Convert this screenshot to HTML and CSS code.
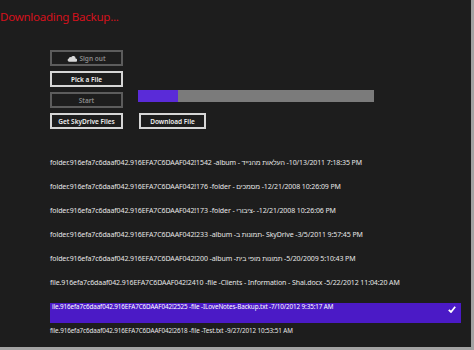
FILE: index.html
```html
<!DOCTYPE html>
<html>
<head>
<meta charset="utf-8">
<link rel="stylesheet" href="styles.css">
</head>
<body>
<div class="screen">
  <h1 class="title">Downloading Backup...</h1>
  <div class="controls">
    <button class="btn disabled"><svg class="cloud" viewBox="0 0 12 8" width="10" height="7"><path d="M2.5 8 H10 A2 2 0 0 0 10.3 4 A2.8 2.8 0 0 0 5 2.6 A2 2 0 0 0 2.2 4.1 A2 2 0 0 0 2.5 8 Z" fill="#d8d8d8"/></svg>Sign out</button>
    <div></div>
    <button class="btn">Pick a File</button>
    <div></div>
    <button class="btn disabled">Start</button>
    <div class="progress"><div class="fill" style="width:17%"></div></div>
    <button class="btn">Get SkyDrive Files</button>
    <div><button class="btn dl">Download File</button></div>
  </div>
  <ul class="list">
    <li class="item big">folder.916efa7c6daaf042.916EFA7C6DAAF042!1542 -album - <bdi>העלאות מהנייד</bdi> -10/13/2011 7:18:35 PM</li>
    <li class="item big">folder.916efa7c6daaf042.916EFA7C6DAAF042!176 -folder - <bdi>מסמכים</bdi> -12/21/2008 10:26:09 PM</li>
    <li class="item big">folder.916efa7c6daaf042.916EFA7C6DAAF042!173 -folder - <bdi>ציבורי</bdi>- -12/21/2008 10:26:06 PM</li>
    <li class="item big">folder.916efa7c6daaf042.916EFA7C6DAAF042!233 -album -<bdi>תמונות ב</bdi>- SkyDrive -3/5/2011 9:57:45 PM</li>
    <li class="item big">folder.916efa7c6daaf042.916EFA7C6DAAF042!200 -album -<bdi>תמונות מופי בית</bdi> -5/20/2009 5:10:43 PM</li>
    <li class="item big">file.916efa7c6daaf042.916EFA7C6DAAF042!2410 -file -Clients - Information - Shai.docx -5/22/2012 11:04:20 AM</li>
    <li class="item selected"><span>ile.916efa7c6daaf042.916EFA7C6DAAF042!2525 -file -ILoveNotes-Backup.txt -7/10/2012 9:35:17 AM</span><svg class="check" viewBox="0 0 8 7" width="8" height="7"><path d="M0.8 3.8 L3 6 L7.2 0.8" fill="none" stroke="#fff" stroke-width="1.8"/></svg></li>
    <li class="item">file.916efa7c6daaf042.916EFA7C6DAAF042!2618 -file -Test.txt -9/27/2012 10:53:51 AM</li>
  </ul>
</div>
</body>
</html>
```
FILE: styles.css
```css
html, body {
  margin: 0;
  padding: 0;
  background: #a3a3a3;
}
body {
  width: 474px;
  height: 350px;
  overflow: hidden;
}
.screen {
  width: 471px;
  height: 347px;
  background: #1d1d1d;
  overflow: hidden;
  font-family: "Noto Sans", "Noto Sans CJK SC", sans-serif;
  color: #e8e8e8;
}
.title {
  margin: 0;
  padding: 9px 0 0 0;
  height: 50px;
  box-sizing: border-box;
  font-size: 11.6px;
  font-weight: normal;
  color: #d4111c;
  line-height: 16px;
  letter-spacing: -0.3px;
}
.controls {
  display: grid;
  grid-template-columns: 73px 1fr;
  grid-auto-rows: 16px;
  row-gap: 5px;
  column-gap: 15px;
  margin-left: 50px;
  width: 324px;
}
.btn {
  box-sizing: border-box;
  height: 16px;
  width: 73px;
  margin: 0;
  padding: 0;
  background: transparent;
  border: 2px solid #d6d6d6;
  color: #f0f0f0;
  font-family: "Noto Sans", sans-serif;
  font-size: 6.5px;
  font-weight: 600;
  display: flex;
  align-items: center;
  justify-content: center;
  gap: 2px;
}
.btn.disabled {
  border-color: #5c5c5c;
  color: #8a8a8a;
}
.btn.dl {
  width: 67px;
  margin-left: 1px;
}
.cloud {
  display: block;
}
.progress {
  height: 12px;
  margin-top: -2px;
  background: #7b7b7b;
}
.fill {
  height: 100%;
  background: #5a2bd8;
}
.list {
  list-style: none;
  margin: 30px 0 0 50px;
  padding: 0;
  width: 411px;
}
.item {
  height: 20px;
  margin-bottom: 4px;
  font-size: 6.3px;
  line-height: 8px;
  white-space: nowrap;
  letter-spacing: -0.1px;
  color: #e6e6e6;
}
.item.big {
  font-size: 7px;
}
.item.selected {
  background: #4b1ac6;
  padding-left: 2px;
  display: flex;
  justify-content: space-between;
  align-items: flex-start;
  color: #ffffff;
}
.check {
  margin: 3px 5px 0 0;
}
```
